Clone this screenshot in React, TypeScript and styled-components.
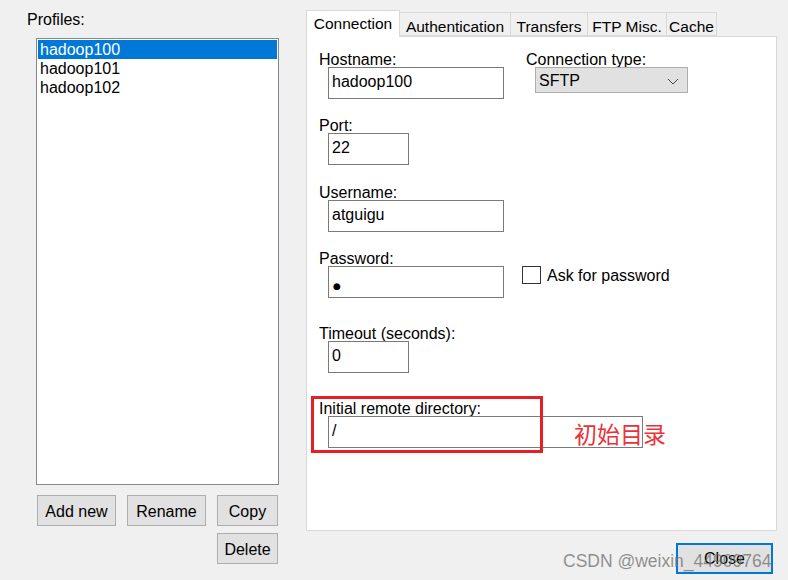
import React from "react";
import styled, { createGlobalStyle } from "styled-components";

const profiles = ["hadoop100", "hadoop101", "hadoop102"];
const tabs = [
  { label: "Connection", width: 94 },
  { label: "Authentication", width: 112 },
  { label: "Transfers", width: 78 },
  { label: "FTP Misc.", width: 80 },
  { label: "Cache", width: 51 },
];

const App = () => {
  return (
    <>
      <GlobalStyle />
      <Page>
        <LeftCol>
          <Label>Profiles:</Label>
          <ListBox>
            {profiles.map((p, i) => (
              <ListItem key={p} selected={i === 0}>
                {p}
              </ListItem>
            ))}
          </ListBox>
          <ButtonGrid>
            <Button w={79}>Add new</Button>
            <Button w={79}>Rename</Button>
            <Button w={61}>Copy</Button>
            <Button w={61} style={{ gridColumn: 3 }}>
              Delete
            </Button>
          </ButtonGrid>
        </LeftCol>

        <RightCol>
          <TabStrip>
            {tabs.map((t, i) => (
              <Tab key={t.label} active={i === 0} w={t.width}>
                {t.label}
              </Tab>
            ))}
          </TabStrip>
          <Panel>
            <Row>
              <Field w={207}>
                <Label>Hostname:</Label>
                <Input w={176}>hadoop100</Input>
              </Field>
              <Field>
                <Label>Connection type:</Label>
                <Select>
                  <span>SFTP</span>
                  <svg width="12" height="7" viewBox="0 0 12 7">
                    <polyline points="1,1 6,6 11,1" fill="none" stroke="#444" strokeWidth="1" />
                  </svg>
                </Select>
              </Field>
            </Row>

            <Field gap={17}>
              <Label>Port:</Label>
              <Input w={81}>22</Input>
            </Field>

            <Field gap={18}>
              <Label>Username:</Label>
              <Input w={176}>atguigu</Input>
            </Field>

            <Field gap={17}>
              <Label>Password:</Label>
              <Row>
                <Input w={176}>
                  <Dot>●</Dot>
                </Input>
                <CheckRow>
                  <CheckBox />
                  <CheckText>Ask for password</CheckText>
                </CheckRow>
              </Row>
            </Field>

            <Field gap={26}>
              <Label>Timeout (seconds):</Label>
              <Input w={81}>0</Input>
            </Field>

            <Field gap={26}>
              <Label>Initial remote directory:</Label>
              <Input w={315}>/</Input>
            </Field>

            <RedBox />
            <Note>初始目录</Note>
          </Panel>
          <Footer>
            <CloseButton>Close</CloseButton>
          </Footer>
        </RightCol>
        <Watermark>CSDN @weixin_44909764</Watermark>
      </Page>
    </>
  );
};

const GlobalStyle = createGlobalStyle`
  html, body {
    margin: 0;
    padding: 0;
    background: #f0f0f0;
  }
  body {
    font-family: "Liberation Sans", Arial, sans-serif;
    font-size: 16px;
    color: #000;
  }
  * {
    box-sizing: border-box;
  }
`;

const Page = styled.div`
  position: relative;
  display: flex;
  width: 788px;
  height: 580px;
  padding: 10px 0 0 27px;
  overflow: hidden;
`;

const LeftCol = styled.div`
  display: flex;
  flex-direction: column;
  width: 252px;
`;

const Label = styled.div`
  line-height: 20px;
  height: 17px;
  white-space: nowrap;
`;

const ListBox = styled.div`
  margin: 11px 0 0 9px;
  width: 243px;
  height: 447px;
  border: 1px solid #828790;
  background: #fff;
  padding: 1px;
`;

const ListItem = styled.div<{ selected?: boolean }>`
  height: 19px;
  line-height: 20px;
  padding-left: 2px;
  background: ${(p) => (p.selected ? "#0078d7" : "transparent")};
  color: ${(p) => (p.selected ? "#fff" : "#000")};
`;

const ButtonGrid = styled.div`
  display: grid;
  grid-template-columns: 79px 79px 61px;
  column-gap: 11px;
  row-gap: 7px;
  margin: 10px 0 0 10px;
`;

const Button = styled.div<{ w: number }>`
  width: ${(p) => p.w}px;
  height: 31px;
  display: flex;
  align-items: center;
  justify-content: center;
  padding-top: 2px;
  background: #e1e1e1;
  border: 1px solid #adadad;
`;

const RightCol = styled.div`
  display: flex;
  flex-direction: column;
  margin-left: 27px;
  width: 471px;
`;

const TabStrip = styled.div`
  display: flex;
  align-items: flex-end;
  height: 26px;
  position: relative;
  z-index: 1;
`;

const Tab = styled.div<{ active?: boolean; w: number }>`
  width: ${(p) => p.w}px;
  height: ${(p) => (p.active ? 27 : 24)}px;
  margin-left: -1px;
  margin-bottom: ${(p) => (p.active ? -1 : 0)}px;
  padding-top: ${(p) => (p.active ? 4 : 5)}px;
  text-align: center;
  font-size: 15.5px;
  line-height: 17px;
  white-space: nowrap;
  background: ${(p) => (p.active ? "#fff" : "#f0f0f0")};
  border: 1px solid #d9d9d9;
  border-bottom: ${(p) => (p.active ? "none" : "1px solid #d9d9d9")};
  &:first-child {
    margin-left: 0;
  }
`;

const Panel = styled.div`
  position: relative;
  height: 495px;
  border: 1px solid #d9d9d9;
  background: #fff;
  padding: 13px 0 0 12px;
`;

const Row = styled.div`
  display: flex;
  align-items: flex-start;
`;

const Field = styled.div<{ w?: number; gap?: number }>`
  width: ${(p) => (p.w ? `${p.w}px` : "auto")};
  margin-top: ${(p) => p.gap || 0}px;
  display: flex;
  flex-direction: column;
  align-items: flex-start;
`;

const Input = styled.div<{ w: number }>`
  width: ${(p) => p.w}px;
  height: 32px;
  margin-left: 9px;
  border: 1px solid #7a7a7a;
  background: #fff;
  padding: 5px 3px 0;
  line-height: 18px;
`;

const Dot = styled.span`
  font-family: "DejaVu Sans", sans-serif;
  font-size: 9px;
  position: relative;
  top: 3px;
  left: 1px;
`;

const Select = styled.div`
  width: 153px;
  height: 26px;
  margin-left: 9px;
  display: flex;
  align-items: center;
  justify-content: space-between;
  padding: 2px 8px 0 3px;
  background: #e1e1e1;
  border: 1px solid #adadad;
`;

const CheckRow = styled.div`
  display: flex;
  align-items: flex-start;
  gap: 6px;
  margin-left: 18px;
`;

const CheckBox = styled.div`
  width: 19px;
  height: 18px;
  border: 1px solid #333;
  background: #fff;
`;

const CheckText = styled.span`
  line-height: 20px;
`;

const RedBox = styled.div`
  position: absolute;
  left: 4px;
  top: 359px;
  width: 232px;
  height: 57px;
  border: 3px solid #e42026;
`;

const Note = styled.div`
  position: absolute;
  left: 267px;
  top: 383px;
  font-family: "Noto Sans CJK SC", sans-serif;
  font-size: 23px;
  line-height: 26px;
  color: #e8333a;
`;

const Footer = styled.div`
  display: flex;
  justify-content: flex-end;
  padding: 12px 4px 0 0;
`;

const CloseButton = styled.div`
  width: 97px;
  height: 31px;
  display: flex;
  align-items: center;
  justify-content: center;
  background: #e1e1e1;
  border: 2px solid #0078d7;
`;

const Watermark = styled.div`
  position: absolute;
  left: 563px;
  top: 551px;
  font-size: 17.5px;
  line-height: 20px;
  color: rgba(110, 110, 110, 0.75);
  white-space: nowrap;
  pointer-events: none;
`;

export default App;
